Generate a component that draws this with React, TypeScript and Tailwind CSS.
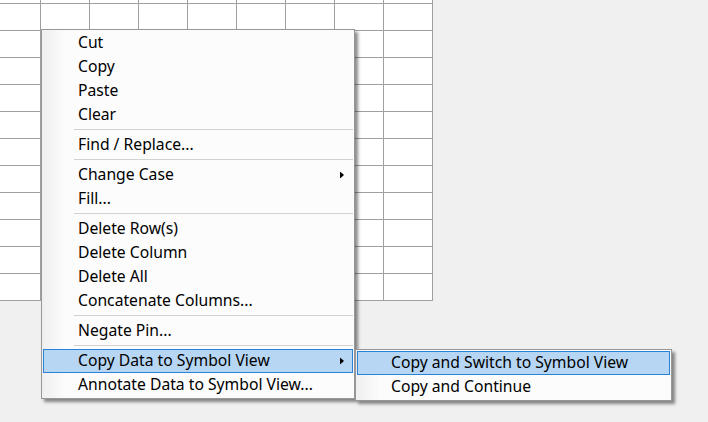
import React from "react";

type Entry = { label: string; sub?: boolean; active?: boolean } | "sep";

const items: Entry[] = [
  { label: "Cut" },
  { label: "Copy" },
  { label: "Paste" },
  { label: "Clear" },
  "sep",
  { label: "Find / Replace..." },
  "sep",
  { label: "Change Case", sub: true },
  { label: "Fill..." },
  "sep",
  { label: "Delete Row(s)" },
  { label: "Delete Column" },
  { label: "Delete All" },
  { label: "Concatenate Columns..." },
  "sep",
  { label: "Negate Pin..." },
  "sep",
  { label: "Copy Data to Symbol View", sub: true, active: true },
  { label: "Annotate Data to Symbol View..." },
];

function Arrow() {
  return (
    <svg
      className="absolute right-[9px] top-1/2 -translate-y-1/2"
      width="4"
      height="7"
      viewBox="0 0 4 7"
    >
      <polygon points="0,0 4,3.5 0,7" fill="#000" />
    </svg>
  );
}

export default function App() {
  const cells = [];
  for (let r = 0; r < 12; r++) {
    for (let c = 0; c < 9; c++) {
      cells.push(
        <div key={`${r}-${c}`} className="bg-white border-r border-b border-[#a0a0a0]" />
      );
    }
  }
  return (
    <div
      className="relative w-[708px] h-[422px] overflow-hidden bg-[#f0f0f0] text-black"
      style={{ fontFamily: '"Noto Sans", "Open Sans", sans-serif' }}
    >
      <div className="grid w-[433px] grid-cols-[41px_repeat(8,49px)] grid-rows-[4px_repeat(11,27px)]">
        {cells}
      </div>

      {/* main context menu */}
      <div className="absolute left-[41px] top-[29px] flex w-[314px] flex-col border border-[#979797] p-[1px] bg-[linear-gradient(90deg,#efefef_0px,#fcfcfc_24px)] shadow-[3px_3px_3px_rgba(0,0,0,0.45)]">
        {items.map((it, i) =>
          it === "sep" ? (
            <div key={i} className="h-[6px] pl-[31px] pt-[2px]">
              <div className="h-px bg-[#d2d2d2]" />
            </div>
          ) : (
            <div
              key={i}
              className={
                "relative flex h-[24px] items-center pl-[35px] text-[15.7px] leading-none " +
                (it.active ? "bg-[#b6d6f4] outline outline-1 -outline-offset-1 outline-[#2a82d8]" : "")
              }
            >
              {it.label}
              {it.sub && <Arrow />}
            </div>
          )
        )}
      </div>

      {/* submenu */}
      <div className="absolute left-[355px] top-[349px] flex w-[317px] flex-col border border-[#979797] p-[1px] bg-[linear-gradient(90deg,#efefef_0px,#fcfcfc_24px)] shadow-[3px_3px_3px_rgba(0,0,0,0.45)]">
        <div className="flex h-[24px] items-center pl-[34px] text-[15.7px] leading-none bg-[#b6d6f4] outline outline-1 -outline-offset-1 outline-[#2a82d8]">
          Copy and Switch to Symbol View
        </div>
        <div className="flex h-[24px] items-center pl-[34px] text-[15.7px] leading-none">
          Copy and Continue
        </div>
      </div>
    </div>
  );
}
